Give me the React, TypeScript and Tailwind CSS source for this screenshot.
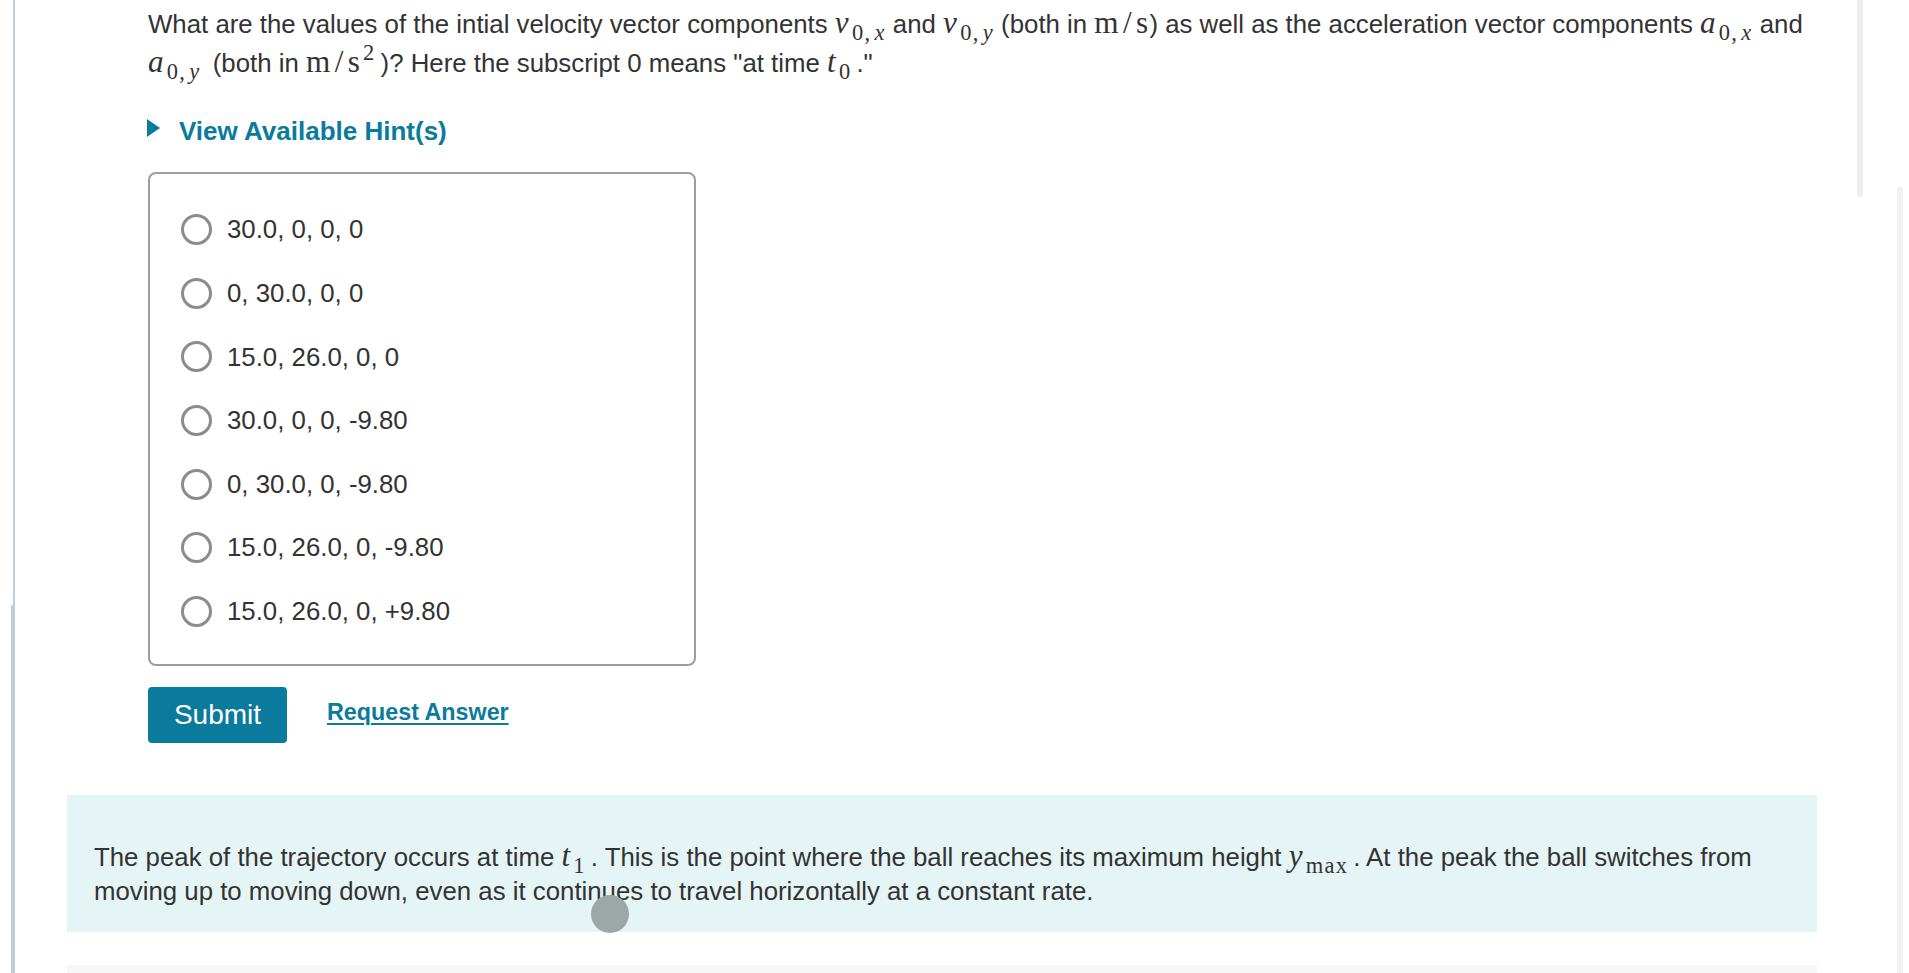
import React from 'react'

const options = [
  '30.0, 0, 0, 0',
  '0, 30.0, 0, 0',
  '15.0, 26.0, 0, 0',
  '30.0, 0, 0, -9.80',
  '0, 30.0, 0, -9.80',
  '15.0, 26.0, 0, -9.80',
  '15.0, 26.0, 0, +9.80',
]

/* ===== tiny math helpers (KaTeX-ish look) ===== */
const Math = ({ children, gap }: { children: React.ReactNode; gap?: boolean }) => (
  <span
    className={`font-['Liberation_Serif','Times_New_Roman',serif] text-[1.21em] leading-[0] tracking-[0.04em] whitespace-nowrap ${gap ? 'mr-[5px]' : ''}`}
  >
    {children}
  </span>
)

const I = ({ children }: { children: React.ReactNode }) => <span className="italic">{children}</span>

const Sub = ({ children }: { children: React.ReactNode }) => (
  <span className="ml-[2px] text-[0.72em] leading-[0] align-[-0.32em]">{children}</span>
)

const Sup = ({ children }: { children: React.ReactNode }) => (
  <span className="ml-[2px] text-[0.72em] leading-[0] align-[0.55em]">{children}</span>
)

const Slash = () => <span className="px-[0.1em]">/</span>

const Comma = () => <span className="mr-[0.14em]">,</span>

const App = () => {
  const [picked, setPicked] = React.useState<number | null>(null)

  return (
    <div className="relative flex h-[973px] w-[1909px] overflow-hidden bg-white font-['Liberation_Sans',Arial,sans-serif] text-[#333333]">
      {/* left rule */}
      <div className="w-[11px] shrink-0" />
      <div className="flex w-[4px] shrink-0 flex-col">
        <div className="ml-[2px] h-[605px] w-[2px] bg-[#bccfe0]" />
        <div className="flex-1 bg-[#bccfe0]" />
      </div>
      <div className="w-[52px] shrink-0" />

      {/* ===== main column ===== */}
      <main className="flex w-[1750px] shrink-0 flex-col">
        <div className="pl-[81px]">
          <p className="pt-[5px] text-[25.8px] leading-[39px]">
            What are the values of the intial velocity vector components{' '}
            <Math>
              <I>v</I>
              <Sub>
                0<Comma />
                <I>x</I>
              </Sub>
            </Math>{' '}
            and{' '}
            <Math>
              <I>v</I>
              <Sub>
                0<Comma />
                <I>y</I>
              </Sub>
            </Math>{' '}
            (both in{' '}
            <Math>
              m<Slash />s
            </Math>
            ) as well as the acceleration vector components{' '}
            <Math>
              <I>a</I>
              <Sub>
                0<Comma />
                <I>x</I>
              </Sub>
            </Math>{' '}
            and{' '}
            <Math gap>
              <I>a</I>
              <Sub>
                0<Comma />
                <I>y</I>
              </Sub>
            </Math>{' '}
            (both in{' '}
            <Math gap>
              m<Slash />s<Sup>2</Sup>
            </Math>
            )? Here the subscript 0 means "at time{' '}
            <Math gap>
              <I>t</I>
              <Sub>0</Sub>
            </Math>
            ."
          </p>

          {/* hint toggle */}
          <div className="mt-[33px] flex h-[30px] items-start gap-[19px] text-[26px] font-bold leading-[30px] text-[#0a7b9c]">
            <svg width="13" height="18" viewBox="0 0 13 18" className="ml-[-1px] mt-[3px] shrink-0">
              <path d="M0 0 L13 9 L0 18 Z" fill="#0a7b9c" />
            </svg>
            <span>View Available Hint(s)</span>
          </div>

          {/* choices */}
          <div className="mt-[26px] w-[548px] rounded-[8px] border-2 border-[#9d9d9d] pb-[21px] pl-[31px] pt-[24px]">
            {options.map((o, i) => (
              <label
                key={o}
                onClick={() => setPicked(i)}
                className="flex h-[63.6px] cursor-pointer items-center gap-[15px] text-[25.8px]"
              >
                <span className="flex h-[31px] w-[31px] shrink-0 items-center justify-center rounded-full border-[3px] border-[#8c8c8c]">
                  {picked === i && <span className="h-[15px] w-[15px] rounded-full bg-[#0a7b9c]" />}
                </span>
                {o}
              </label>
            ))}
          </div>

          <div className="mt-[21px] flex items-center gap-[40px]">
            <button className="h-[56px] w-[139px] rounded-[4px] bg-[#0a7b9c] text-[28px] text-white">
              Submit
            </button>
            <a className="mb-[5px] cursor-pointer text-[23.3px] font-bold text-[#0a7b9c] underline decoration-2 underline-offset-[3px]">
              Request Answer
            </a>
          </div>
        </div>

        {/* feedback */}
        <div className="mt-[52px] bg-[#e5f5f5] px-[27px] pb-[24px] pt-[45px] text-[25.8px] leading-[34px]">
          The peak of the trajectory occurs at time{' '}
          <Math gap>
            <I>t</I>
            <Sub>1</Sub>
          </Math>
          . This is the point where the ball reaches its maximum height{' '}
          <Math gap>
            <I>y</I>
            <Sub>max</Sub>
          </Math>
          . At the peak the ball switches from moving up to moving down, even as it continues to travel
          horizontally at a constant rate.
        </div>

        <div className="mt-[33px] flex-1 bg-[#f7f7f7]" />
      </main>

      {/* scroll thumbs */}
      <div className="w-[40px] shrink-0" />
      <div className="w-[6px] shrink-0">
        <div className="h-[197px] rounded-b-full bg-[#eeeeee]" />
      </div>
      <div className="w-[34px] shrink-0" />
      <div className="flex w-[6px] shrink-0 flex-col">
        <div className="mt-[187px] flex-1 rounded-t-full bg-[#f1f1f1]" />
      </div>

      {/* touch cursor */}
      <div className="absolute left-[591px] top-[895px] h-[38px] w-[38px] rounded-full bg-[#9ea7a7]" />
    </div>
  )
}

export default App
